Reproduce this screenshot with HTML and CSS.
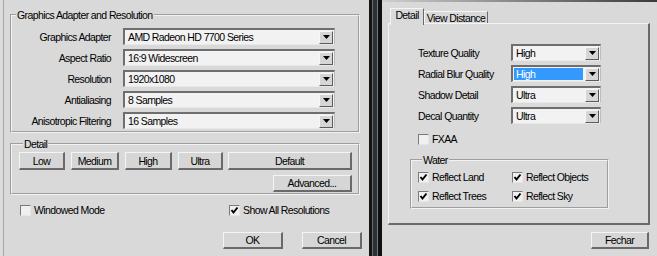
FILE: index.html
```html
<!DOCTYPE html>
<html>
	<head>
		<meta charset="UTF-8">
		<title>Settings</title>
		<link rel="stylesheet" href="styles.css">
	</head>

	<body>
		<div class="screen">
			<!--左边：显卡和分辨率-->
			<div class="win leftWin">
				<fieldset class="group adapter">
					<legend>Graphics Adapter and Resolution</legend>
					<div class="form">
						<label>Graphics Adapter</label>
						<div class="combo"><span class="val">AMD Radeon HD 7700 Series</span><span class="drop"><svg width="7" height="4" viewBox="0 0 7 4"><polygon points="0,0 7,0 3.5,4" fill="#000"/></svg></span></div>
						<label>Aspect Ratio</label>
						<div class="combo"><span class="val">16:9 Widescreen</span><span class="drop"><svg width="7" height="4" viewBox="0 0 7 4"><polygon points="0,0 7,0 3.5,4" fill="#000"/></svg></span></div>
						<label>Resolution</label>
						<div class="combo"><span class="val">1920x1080</span><span class="drop"><svg width="7" height="4" viewBox="0 0 7 4"><polygon points="0,0 7,0 3.5,4" fill="#000"/></svg></span></div>
						<label>Antialiasing</label>
						<div class="combo"><span class="val">8 Samples</span><span class="drop"><svg width="7" height="4" viewBox="0 0 7 4"><polygon points="0,0 7,0 3.5,4" fill="#000"/></svg></span></div>
						<label>Anisotropic Filtering</label>
						<div class="combo"><span class="val">16 Samples</span><span class="drop"><svg width="7" height="4" viewBox="0 0 7 4"><polygon points="0,0 7,0 3.5,4" fill="#000"/></svg></span></div>
					</div>
				</fieldset>

				<fieldset class="group detail">
					<legend>Detail</legend>
					<div class="presets">
						<button class="btn low">Low</button>
						<button class="btn medium">Medium</button>
						<button class="btn high">High</button>
						<button class="btn ultra">Ultra</button>
						<button class="btn default">Default</button>
					</div>
					<div class="advRow">
						<button class="btn advanced">Advanced...</button>
					</div>
				</fieldset>

				<div class="checks">
					<div class="check"><span class="box"></span>Windowed Mode</div>
					<div class="check"><span class="box"><svg width="9" height="9" viewBox="0 0 9 9"><polyline points="1.5,4 3.5,6.5 7.5,1.5" fill="none" stroke="#000" stroke-width="2"/></svg></span>Show All Resolutions</div>
				</div>

				<div class="actions">
					<button class="btn ok">OK</button>
					<button class="btn cancel">Cancel</button>
				</div>
			</div>

			<div class="sep"></div>

			<!--右边：Detail 标签页-->
			<div class="win rightWin">
				<div class="tabs">
					<span class="tab current">Detail</span>
					<span class="tab view">View Distance</span>
				</div>
				<div class="panel">
					<div class="form small">
						<label>Texture Quality</label>
						<div class="combo"><span class="val">High</span><span class="drop"><svg width="7" height="4" viewBox="0 0 7 4"><polygon points="0,0 7,0 3.5,4" fill="#000"/></svg></span></div>
						<label>Radial Blur Quality</label>
						<div class="combo"><span class="val selected">High</span><span class="drop"><svg width="7" height="4" viewBox="0 0 7 4"><polygon points="0,0 7,0 3.5,4" fill="#000"/></svg></span></div>
						<label>Shadow Detail</label>
						<div class="combo"><span class="val">Ultra</span><span class="drop"><svg width="7" height="4" viewBox="0 0 7 4"><polygon points="0,0 7,0 3.5,4" fill="#000"/></svg></span></div>
						<label>Decal Quantity</label>
						<div class="combo"><span class="val">Ultra</span><span class="drop"><svg width="7" height="4" viewBox="0 0 7 4"><polygon points="0,0 7,0 3.5,4" fill="#000"/></svg></span></div>
					</div>

					<div class="check fxaa"><span class="box"></span>FXAA</div>

					<fieldset class="group water">
						<legend>Water</legend>
						<div class="waterList">
							<div class="check"><span class="box"><svg width="9" height="9" viewBox="0 0 9 9"><polyline points="1.5,4 3.5,6.5 7.5,1.5" fill="none" stroke="#000" stroke-width="2"/></svg></span>Reflect Land</div>
							<div class="check"><span class="box"><svg width="9" height="9" viewBox="0 0 9 9"><polyline points="1.5,4 3.5,6.5 7.5,1.5" fill="none" stroke="#000" stroke-width="2"/></svg></span>Reflect Objects</div>
							<div class="check"><span class="box"><svg width="9" height="9" viewBox="0 0 9 9"><polyline points="1.5,4 3.5,6.5 7.5,1.5" fill="none" stroke="#000" stroke-width="2"/></svg></span>Reflect Trees</div>
							<div class="check"><span class="box"><svg width="9" height="9" viewBox="0 0 9 9"><polyline points="1.5,4 3.5,6.5 7.5,1.5" fill="none" stroke="#000" stroke-width="2"/></svg></span>Reflect Sky</div>
						</div>
					</fieldset>
				</div>
				<div class="footer">
					<button class="btn fechar">Fechar</button>
				</div>
			</div>
		</div>
	</body>
</html>
```

FILE: styles.css
```css
*{
	margin: 0;
	padding: 0;
	box-sizing: border-box;
}

html,body{
	height: 100%;
	overflow: hidden;
}

body{
	background: #d8d8d8;
	font-family: "Liberation Sans", Arial, sans-serif;
	font-size: 10.5px;
	letter-spacing: -0.6px;
	color: #000;
}

.screen{
	display: flex;
	width: 657px;
	height: 256px;
}

.win{
	background: #d9d9d9;
}

/* 左窗口 */
.leftWin{
	width: 369px;
	padding: 9px 0 0 10px;
	box-shadow: inset 3px 0 #dcdcdc, inset 4px 0 #a8a8a8;
}

.group{
	border: 2px groove #f2f2f2;
	padding: 0;
}

.group legend{
	margin-left: 4px;
	padding: 0 1px;
	line-height: 12px;
}

.adapter{
	width: 350px;
	padding: 7px 0 2px 0;
}

.form{
	display: grid;
	grid-template-columns: 99px 212px;
	column-gap: 12px;
	row-gap: 4px;
	align-items: center;
}

.form label{
	text-align: right;
}

.combo{
	display: flex;
	height: 17px;
	background: #f2f2f2;
	border-top: 2px solid #6e6e6e;
	border-left: 2px solid #6e6e6e;
	border-bottom: 1px solid #e8e8e8;
	border-right: 1px solid #bdbdbd;
	align-items: center;
}

.combo .val{
	flex: 1;
	padding-left: 3px;
	line-height: 12px;
	white-space: nowrap;
	overflow: hidden;
}

.combo .val.selected{
	background: #3399ff;
	color: #fff;
	margin: 0 2px 0 1px;
	padding-left: 2px;
}

.combo .drop{
	display: flex;
	align-items: center;
	justify-content: center;
	width: 14px;
	height: 13px;
	margin-right: 1px;
	background: #d6d6d6;
	border-top: 1px solid #f7f7f7;
	border-left: 1px solid #f7f7f7;
	border-bottom: 1px solid #5c5c5c;
	border-right: 1px solid #5c5c5c;
}

.detail{
	width: 350px;
	margin-top: 5px;
	padding: 2px 6px 1px 7px;
}

.btn{
	display: flex;
	align-items: center;
	justify-content: center;
	height: 18px;
	background: #d6d6d6;
	border-top: 1px solid #f4f4f4;
	border-left: 1px solid #f4f4f4;
	border-bottom: 2px solid #6a6a6a;
	border-right: 2px solid #6a6a6a;
	font: inherit;
	letter-spacing: inherit;
	color: #000;
}

.presets{
	display: flex;
	gap: 5px;
}

.presets .low{
	width: 46px;
}
.presets .medium{
	width: 48px;
	margin-left: 1px;
}
.presets .high{
	width: 47px;
	margin-left: 1px;
}
.presets .ultra{
	width: 45px;
	margin-left: 1px;
}
.presets .default{
	flex: 1;
}

.advRow{
	display: flex;
	justify-content: flex-end;
	margin-top: 5px;
}

.advanced{
	width: 79px;
	height: 17px;
}

.check{
	display: flex;
	align-items: center;
	height: 12px;
	white-space: nowrap;
}

.box{
	display: flex;
	align-items: center;
	justify-content: center;
	width: 11px;
	height: 11px;
	margin-right: 3px;
	background: #f0f0f0;
	border-top: 1px solid #7a7a7a;
	border-left: 1px solid #7a7a7a;
	border-bottom: 1px solid #e6e6e6;
	border-right: 1px solid #e6e6e6;
}

.checks{
	display: grid;
	grid-template-columns: 209px auto;
	margin: 9px 0 0 10px;
}

.actions{
	display: flex;
	gap: 19px;
	margin: 16px 0 0 213px;
}

.actions .btn{
	width: 60px;
	height: 17px;
}

/* 分隔条 */
.sep{
	width: 13px;
	background: linear-gradient(to right, #141414 0, #141414 3px, #6a6a6a 3px, #6a6a6a 4px, #2b3237 4px, #2b3237 8px, #757575 8px, #757575 9px, #101010 9px);
}

/* 右窗口 */
.rightWin{
	flex: 1;
	padding: 8px 0 0 6px;
	background: linear-gradient(to right, #cfcfcf, #3a3a3a) 0 0 / 100% 2px no-repeat, #d9d9d9;
}

.tabs{
	display: flex;
	align-items: flex-end;
	height: 15px;
	margin-left: 2px;
}

.tab{
	height: 12px;
	line-height: 12px;
	text-align: center;
	border-top: 1px solid #f4f4f4;
	border-left: 1px solid #f4f4f4;
	border-right: 1px solid #6a6a6a;
}

.tab.current{
	position: relative;
	width: 34px;
	height: 17px;
	margin-bottom: -2px;
	padding-bottom: 4px;
	background: #dadada;
}

.tab.view{
	width: 64px;
}

.panel{
	width: 262px;
	height: 202px;
	padding: 20px 0 0 29px;
	background: #dadada;
	border-top: 1px solid #f4f4f4;
	border-left: 1px solid #f4f4f4;
	border-right: 2px solid #6a6a6a;
	border-bottom: 2px solid #6a6a6a;
}

.form.small{
	grid-template-columns: 93px 90px;
	column-gap: 0;
}

.form.small label{
	text-align: left;
}

.fxaa{
	margin-top: 9px;
}

.water{
	width: 199px;
	height: 55px;
	margin: 9px 0 0 -8px;
	padding: 5px 0 0 6px;
}

.waterList{
	display: grid;
	grid-template-columns: 94px auto;
	row-gap: 7px;
}

.footer{
	display: flex;
	justify-content: flex-end;
	margin: 7px 8px 0 0;
}

.fechar{
	width: 58px;
	height: 17px;
}
```
